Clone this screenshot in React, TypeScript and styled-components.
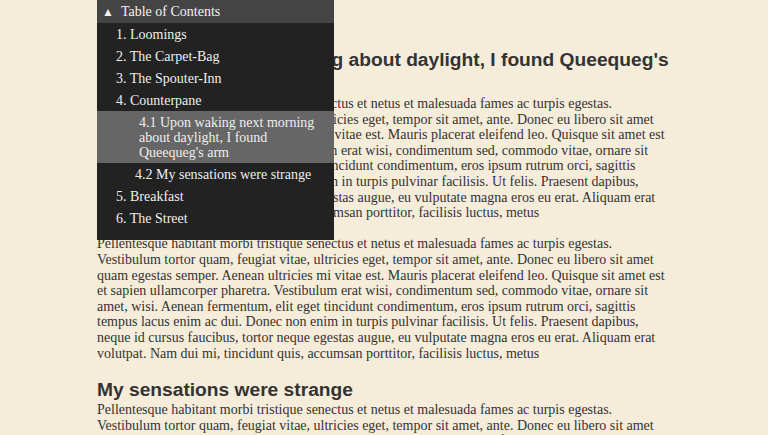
import styled, { createGlobalStyle } from 'styled-components'

const GlobalStyle = createGlobalStyle`
  html, body {
    margin: 0;
    padding: 0;
    background-color: #f6ecda;
  }
  body {
    font-family: Georgia, 'Liberation Serif', serif;
    font-size: 14px;
    color: #333;
  }
`

const PageStyled = styled.main`
  width: 574px;
  margin: 0 auto;
  padding-top: 31px;
  height: 435px;
  overflow: hidden;
  box-sizing: border-box;
`

const HeadingStyled = styled.h2`
  font-family: 'Liberation Sans', Arial, sans-serif;
  font-weight: 700;
  font-size: 19.2px;
  line-height: 24px;
  color: #333;
  margin: 17px 0 0;
`

const ParagraphStyled = styled.p`
  margin: 0 0 15.6px;
  line-height: 15.6px;
`

const TocStyled = styled.nav`
  position: fixed;
  top: 0;
  left: 97px;
  width: 237px;
  padding-bottom: 11px;
  background-color: #222;
  color: #eee;
  font-family: Georgia, 'Liberation Serif', serif;
  font-size: 14px;
`

const TocHeaderStyled = styled.div`
  height: 23px;
  display: flex;
  align-items: center;
  gap: 7px;
  padding-left: 5px;
  background-color: #444;
  color: #f2f2f2;
`

const ArrowStyled = styled.span`
  font-size: 12px;
  line-height: 1;
`

const TocListStyled = styled.ol`
  list-style: none;
  margin: 0;
  padding: 0;
`

const TocItemStyled = styled.li<{ sub?: boolean; active?: boolean }>`
  padding: 3.5px 10px 3.5px ${p => (p.sub ? (p.active ? '42px' : '38px') : '19px')};
  line-height: 15px;
  background-color: ${p => (p.active ? '#666' : 'transparent')};
`

const lorem =
  'Pellentesque habitant morbi tristique senectus et netus et malesuada fames ac turpis egestas. Vestibulum tortor quam, feugiat vitae, ultricies eget, tempor sit amet, ante. Donec eu libero sit amet quam egestas semper. Aenean ultricies mi vitae est. Mauris placerat eleifend leo. Quisque sit amet est et sapien ullamcorper pharetra. Vestibulum erat wisi, condimentum sed, commodo vitae, ornare sit amet, wisi. Aenean fermentum, elit eget tincidunt condimentum, eros ipsum rutrum orci, sagittis tempus lacus enim ac dui. Donec non enim in turpis pulvinar facilisis. Ut felis. Praesent dapibus, neque id cursus faucibus, tortor neque egestas augue, eu vulputate magna eros eu erat. Aliquam erat volutpat. Nam dui mi, tincidunt quis, accumsan porttitor, facilisis luctus, metus'

const tocItems = [
  { label: '1. Loomings' },
  { label: '2. The Carpet-Bag' },
  { label: '3. The Spouter-Inn' },
  { label: '4. Counterpane' },
  { label: "4.1 Upon waking next morning about daylight, I found Queequeg's arm", sub: true, active: true },
  { label: '4.2 My sensations were strange', sub: true },
  { label: '5. Breakfast' },
  { label: '6. The Street' },
]

export default function App() {
  return (
    <>
      <GlobalStyle />
      <PageStyled>
        <HeadingStyled>Upon waking next morning about daylight, I found Queequeg's arm</HeadingStyled>
        <ParagraphStyled>{lorem}</ParagraphStyled>
        <ParagraphStyled>{lorem}</ParagraphStyled>
        <HeadingStyled>My sensations were strange</HeadingStyled>
        <ParagraphStyled>{lorem}</ParagraphStyled>
      </PageStyled>
      <TocStyled>
        <TocHeaderStyled>
          <ArrowStyled>▲</ArrowStyled>
          Table of Contents
        </TocHeaderStyled>
        <TocListStyled>
          {tocItems.map(item => (
            <TocItemStyled key={item.label} sub={item.sub} active={item.active}>
              {item.label}
            </TocItemStyled>
          ))}
        </TocListStyled>
      </TocStyled>
    </>
  )
}
